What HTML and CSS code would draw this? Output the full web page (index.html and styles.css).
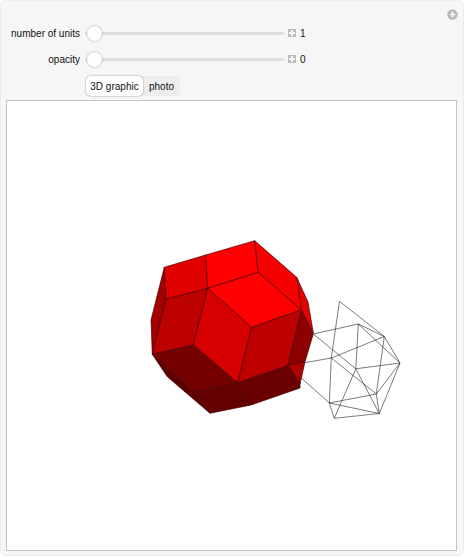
FILE: index.html
```html
<!DOCTYPE html>
<html lang="en">
<head>
    <meta charset="UTF-8">
    <title>Rhombic units</title>
    <link rel="stylesheet" href="styles.css">
</head>
<body>
    <div class="panel">
        <div class="top-bar">
            <svg class="add-icon" width="11" height="11" viewBox="0 0 11 11">
                <circle cx="5.5" cy="5.5" r="5.2" fill="#b9b9b9"/>
                <path d="M5.5 2.6v5.8M2.6 5.5h5.8" stroke="#f6f6f6" stroke-width="1.7"/>
            </svg>
        </div>

        <div class="control-row">
            <span class="control-label">number of units</span>
            <div class="slider"><div class="thumb"></div></div>
            <span class="plus-box"></span>
            <span class="control-value">1</span>
        </div>
        <div class="control-row">
            <span class="control-label">opacity</span>
            <div class="slider"><div class="thumb"></div></div>
            <span class="plus-box"></span>
            <span class="control-value">0</span>
        </div>

        <div class="tabs">
            <span class="tab active">3D graphic</span>
            <span class="tab">photo</span>
        </div>

        <div class="frame">
            <svg class="graphic" width="449" height="449" viewBox="7 101 449 449">
                <!-- wire copy, sits behind the solid -->
                <g fill="none" stroke="#222" stroke-width="0.6">
                    <path d="M339.5 301.3L384.3 336.5L400 363L379.3 413.5L334.3 418.3L329.3 403L331.3 358L339.5 301.3"/>
                    <path d="M313.3 334L358.3 324L384.3 336.5"/>
                    <path d="M358.3 324L400 363"/>
                    <path d="M358.3 324L355.8 368.8L334.3 418.3"/>
                    <path d="M313.3 334L355.8 368.8L400 363"/>
                    <path d="M355.8 368.8L379.3 413.5"/>
                    <path d="M287.7 365.7L331.3 358L384.3 336.5L376.3 394L400 363"/>
                    <path d="M331.3 358L376.3 394L379.3 413.5L329.3 403L376.3 394"/>
                    <path d="M287.7 365.7L329.3 403"/>
                </g>
                <g stroke="#4a0000" stroke-width="0.7" stroke-linejoin="round">
                    <!-- back and side faces -->
                    <polygon fill="#a30000" points="164.3,267.3 166,299.3 152.3,354.3 151,320"/>
                    <polygon fill="#e60000" points="296.7,277.3 308,302 313.3,333 301.3,310"/>
                    <polygon fill="#8c0000" points="301.3,310 313.3,334 305,361.7 287.7,365.7"/>
                    <polygon fill="#ad0000" points="287.7,365.7 305,361.7 300,384"/>
                    <!-- top faces -->
                    <polygon fill="#e00000" points="164.3,267.3 205.7,255 207.7,288.3 166,299.3"/>
                    <polygon fill="#ff0000" points="205.7,255 254.7,240.7 258.3,272.3 207.7,288.3"/>
                    <polygon fill="#f60000" points="254.7,240.7 296.7,277.3 301.3,310 258.3,272.3"/>
                    <polygon fill="#ff0000" points="207.7,288.3 258.3,272.3 301.3,310 251.7,327.3"/>
                    <!-- middle band -->
                    <polygon fill="#bd0000" points="166,299.3 207.7,288.3 193.3,345 152.3,354.3"/>
                    <polygon fill="#d60000" points="207.7,288.3 251.7,327.3 237.7,382.7 193.3,345"/>
                    <polygon fill="#bd0000" points="251.7,327.3 301.3,310 287.7,365.7 237.7,382.7"/>
                    <!-- underside -->
                    <polygon fill="#5c0000" points="152.3,354.3 167.3,376.7 210,413.3 194,392"/>
                    <polygon fill="#740000" points="152.3,354.3 193.3,345 237.7,382.7 194,392"/>
                    <polygon fill="#640000" points="194,392 237.7,382.7 251,405 210,413.3"/>
                    <polygon fill="#6a0000" points="237.7,382.7 287.7,365.7 300,383 300,388 251,405"/>
                </g>
            </svg>
        </div>
    </div>
</body>
</html>
```
FILE: styles.css
```css
html, body {
    margin: 0;
    padding: 0;
    background: #fff;
}

body {
    width: 464px;
    height: 558px;
    font-family: "Liberation Sans", Arial, sans-serif;
    font-size: 10px;
    color: #111;
}

.panel {
    box-sizing: border-box;
    width: 464px;
    height: 556px;
    padding: 0 5px;
    background: #f6f6f6;
    border: 1px solid #ececec;
    border-radius: 6px;
}

.top-bar {
    display: flex;
    justify-content: flex-end;
    height: 19px;
    padding-top: 8px;
    box-sizing: border-box;
}

.add-icon {
    display: block;
}

.control-row {
    display: flex;
    align-items: center;
    height: 26px;
}

.control-label {
    width: 74px;
    text-align: right;
    white-space: nowrap;
}

.slider {
    position: relative;
    width: 199px;
    height: 3px;
    margin-left: 5px;
    background: #dedede;
    border-radius: 2px;
}

.thumb {
    position: absolute;
    left: 2px;
    top: -6px;
    width: 15px;
    height: 15px;
    background: #fff;
    border-radius: 50%;
    box-shadow: 0 0 2px rgba(0, 0, 0, 0.4);
}

.plus-box {
    position: relative;
    width: 8px;
    height: 8px;
    margin-left: 4px;
    background: #bdbdbd;
}

.plus-box::before,
.plus-box::after {
    content: "";
    position: absolute;
    background: #f6f6f6;
}

.plus-box::before {
    left: 1px;
    top: 3px;
    width: 6px;
    height: 2px;
}

.plus-box::after {
    left: 3px;
    top: 1px;
    width: 2px;
    height: 6px;
}

.control-value {
    margin-left: 4px;
}

.tabs {
    display: flex;
    width: 94px;
    height: 20px;
    margin: 4px 0 4px 80px;
    background: #eeeeee;
    border-radius: 5px;
}

.tab {
    display: flex;
    align-items: center;
    justify-content: center;
    flex: 1;
}

.tab.active {
    flex: none;
    width: 57px;
    background: #fff;
    border-radius: 5px;
    box-shadow: 0 0 2px rgba(0, 0, 0, 0.45);
}

.frame {
    box-sizing: border-box;
    width: 451px;
    height: 451px;
    background: #fff;
    border: 1px solid #c4c4c4;
}

.graphic {
    display: block;
}
```
